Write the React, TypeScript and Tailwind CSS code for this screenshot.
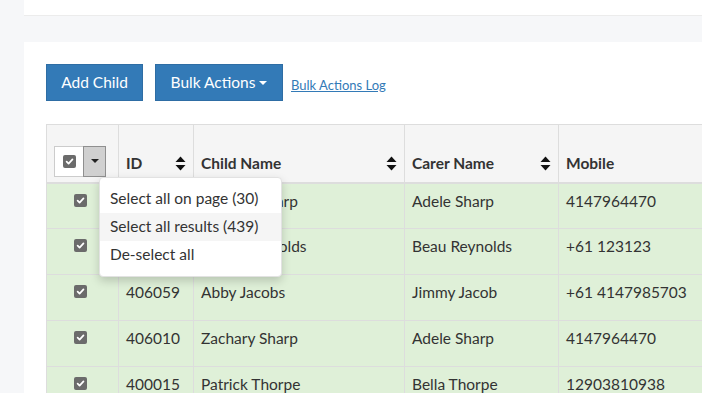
import React from 'react';

const rows = [
  { id: '', child: 'Zachary Sharp', carer: 'Adele Sharp', mobile: '4147964470' },
  { id: '', child: 'Eloise Reynolds', carer: 'Beau Reynolds', mobile: '+61 123123' },
  { id: '406059', child: 'Abby Jacobs', carer: 'Jimmy Jacob', mobile: '+61 4147985703' },
  { id: '406010', child: 'Zachary Sharp', carer: 'Adele Sharp', mobile: '4147964470' },
  { id: '400015', child: 'Patrick Thorpe', carer: 'Bella Thorpe', mobile: '12903810938' },
];

function Check() {
  return (
    <span className="flex w-[13px] h-[13px] rounded-[2px] bg-[#6b6b6b] items-center justify-center">
      <svg width="9" height="9" viewBox="0 0 10 10" className="block">
        <path d="M1.8 5.2 L4 7.4 L8.3 2.6" fill="none" stroke="#fff" strokeWidth="1.9" strokeLinecap="round" strokeLinejoin="round" />
      </svg>
    </span>
  );
}

function SortIcon() {
  return (
    <svg width="11" height="15" viewBox="0 0 11 15" className="shrink-0">
      <path d="M5.5 0.5 L10.5 6 L0.5 6 Z" fill="#111" />
      <path d="M5.5 14.5 L10.5 9 L0.5 9 Z" fill="#111" />
    </svg>
  );
}

function Caret({ color = '#fff' }: { color?: string }) {
  return (
    <svg width="8" height="4" viewBox="0 0 8 4">
      <path d="M0 0 L8 0 L4 4 Z" fill={color} />
    </svg>
  );
}

export default function App() {
  return (
    <div className="h-[393px] overflow-hidden bg-[#f6f7f9] pl-[24px] font-['Lato','Liberation_Sans',sans-serif] text-[15.5px] text-[#333]">
      {/* Top panel */}
      <div className="h-[16px] bg-white border-b border-[#ececec]" />

      {/* Main panel */}
      <div className="mt-[26px] bg-white pt-[22px] pl-[22px] h-[400px] overflow-hidden">
        <div className="flex items-center h-[37px]">
          <button className="h-[37px] w-[97px] bg-[#337ab7] border border-[#2e6da4] text-white text-[15.5px]">
            Add Child
          </button>
          <button className="ml-[12px] h-[37px] w-[128px] bg-[#337ab7] border border-[#2e6da4] text-white text-[15.5px] flex items-center justify-center gap-[4px]">
            Bulk Actions
            <Caret />
          </button>
          <a className="ml-[8px] mt-[6px] text-[13px] text-[#337ab7] underline">Bulk Actions Log</a>
        </div>

        <div className="relative mt-[23px]">
          <table className="border-collapse w-[760px] table-fixed">
            <colgroup>
              <col className="w-[72px]" />
              <col className="w-[75px]" />
              <col className="w-[211px]" />
              <col className="w-[154px]" />
              <col />
            </colgroup>
            <thead>
              <tr className="bg-[#f5f5f5] h-[58px]">
                <th className="border border-[#ddd] border-b-2 align-bottom px-[7px] pb-[5px] text-left">
                  <div className="inline-flex h-[31px] align-bottom">
                    <div className="w-[29px] bg-white border border-[#ccc] border-r-0 flex items-center justify-center">
                      <Check />
                    </div>
                    <div className="w-[23px] bg-[#d0d0d0] border border-[#8f8f8f] flex items-center justify-center">
                      <Caret color="#222" />
                    </div>
                  </div>
                </th>
                {['ID', 'Child Name', 'Carer Name', 'Mobile'].map((h, i) => (
                  <th key={h} className="border border-[#ddd] border-b-2 align-bottom px-[7px] pb-[8px] text-left font-bold leading-[21px]">
                    <div className="flex items-center justify-between">
                      <span>{h}</span>
                      {i < 3 && <SortIcon />}
                    </div>
                  </th>
                ))}
              </tr>
            </thead>
            <tbody>
              {rows.map((r, i) => (
                <tr key={i} className="bg-[#dff0d8] h-[46px]">
                  <td className="border border-[#ddd] align-top pt-[10px] pl-[27px]">
                    <Check />
                  </td>
                  <td className="border border-[#ddd] align-top pt-[7px] px-[7px] leading-[21px]">{r.id}</td>
                  <td className="border border-[#ddd] align-top pt-[7px] px-[7px] leading-[21px]">{r.child}</td>
                  <td className="border border-[#ddd] align-top pt-[7px] px-[7px] leading-[21px]">{r.carer}</td>
                  <td className="border border-[#ddd] align-top pt-[7px] px-[7px] leading-[21px]">{r.mobile}</td>
                </tr>
              ))}
            </tbody>
          </table>

          {/* Select dropdown menu */}
          <div className="absolute left-[53px] top-[53px] w-[183px] bg-white rounded-[4px] border border-[#e2e2e2] shadow-[0_4px_10px_rgba(0,0,0,0.18)] py-[7px]">
            <div className="h-[28px] px-[10px] flex items-center">Select all on page (30)</div>
            <div className="h-[28px] px-[10px] flex items-center bg-[#f5f5f5]">Select all results (439)</div>
            <div className="h-[28px] px-[10px] flex items-center">De-select all</div>
          </div>
        </div>
      </div>
    </div>
  );
}
